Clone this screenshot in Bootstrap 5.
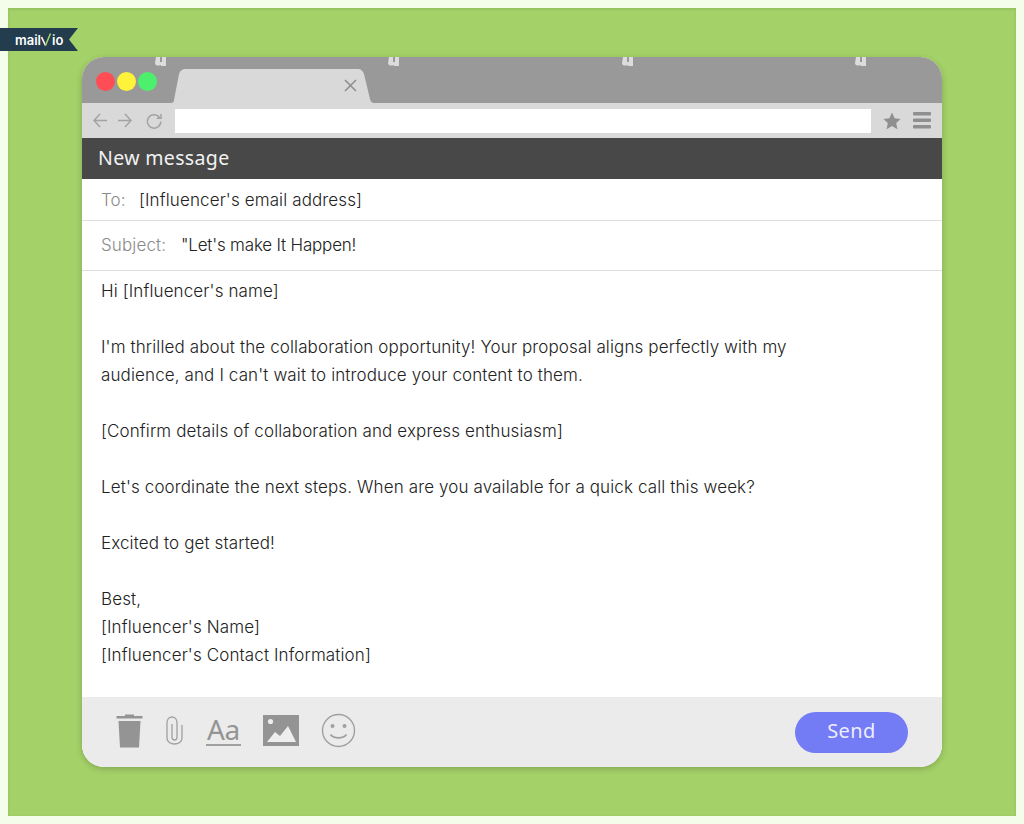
<!DOCTYPE html>
<html lang="en">
<head>
<meta charset="UTF-8">
<title>New message</title>
<link href="https://cdn.jsdelivr.net/npm/bootstrap@5.3.1/dist/css/bootstrap.min.css" rel="stylesheet">
<style>
body{background:#f4fdea;width:1024px;height:824px;padding:8px;overflow:hidden;font-family:"Inter","Noto Sans",sans-serif;}
.stage{width:1008px;height:808px;background:#a4d168;padding:49px 0 0 74px;box-shadow:inset 0 1px 3px rgba(0,0,0,.12);}
.ribbon{position:absolute;left:0;top:28px;width:78px;height:23px;}
.ribbon-text{position:absolute;left:15px;top:31px;font:600 13px/18px "Inter",sans-serif;color:#fff;}
.ribbon-text svg{vertical-align:-1px;}
.mail-win{width:860px;height:710px;border-radius:22px;overflow:hidden;background:#fff;box-shadow:0 2px 6px rgba(0,0,0,.2);position:relative;}
.tabbar{height:46px;background:#999;padding-left:14px;}
.tl{width:19px;height:19px;border-radius:50%;margin-right:2px;margin-top:15px;}
.tl-r{background:#ff4d55;}.tl-y{background:#fff23a;}.tl-g{background:#4df06d;}
.tab-shape{width:203px;height:34px;margin:12px 0 0 12px;}
.nick{position:absolute;top:0;width:11px;height:9px;}
.urlbar{height:35px;background:#d9d9d9;padding:0 11px;}
.url-input{width:696px;height:24px;background:#fff;margin:0 12px 0 13px;}
.title-bar{height:41px;background:#484848;color:#f2f2f2;font:400 19.5px/40px "Noto Sans",sans-serif;padding-left:16px;letter-spacing:.35px;}
.field-row{border-bottom:1px solid #dedede;padding-left:19px;font-size:17px;font-weight:300;color:#222;letter-spacing:.12px;}
.row-to{height:42px;line-height:42px;}
.row-subject{height:50px;line-height:48px;}
.field-label{color:#8b8b8b;}
.to-label{width:38px;}
.subject-label{width:80px;}
.subject-value{letter-spacing:-.2px;}
.msg-body{height:426px;padding:6px 0 0 19px;font-size:17px;font-weight:300;line-height:28px;color:#222;letter-spacing:.12px;}
.msg-body p{margin:0 0 28px;}
.tools{height:70px;background:#ebebeb;padding:0 34px;}
.tool-icons{gap:22px;margin-bottom:3px;}
.aa-icon{display:block;width:35px;color:#949494;font:400 28px/29px "Noto Sans",sans-serif;border-bottom:2px solid #a0a0a0;text-align:center;letter-spacing:-.3px;}
.send-btn{width:113px;height:41px;border-radius:21px;background:#737bf5;color:#eef;font:400 20px/38px "Noto Sans",sans-serif;text-align:center;padding:0 0 2px;border:0;letter-spacing:.4px;}
</style>
</head>
<body>
<div class="stage">
  <div class="mail-win">
    <div class="tabbar d-flex">
      <div class="tl tl-r"></div><div class="tl tl-y"></div><div class="tl tl-g"></div>
      <svg class="tab-shape" viewBox="0 0 203 34"><path d="M0 34C2 34 3 33 3 31L8 5C9 2 11 0 15 0H187C190 0 192 2 193 5L199 30C200 33 201 34 203 34Z" fill="#d9d9d9"/><path d="M174 11L185 22M185 11L174 22" stroke="#8c8c8c" stroke-width="1.5" fill="none"/></svg>
    </div>
    <svg class="nick" style="left:73px" viewBox="0 0 11 9"><path d="M1 0H5V5H7V0H11V9H6V8C4 9 0 9 0 6Z" fill="#dcdcdc"/></svg>
    <svg class="nick" style="left:306px" viewBox="0 0 11 9"><path d="M1 0H5V5H7V0H11V9H6V8C4 9 0 9 0 6Z" fill="#dcdcdc"/></svg>
    <svg class="nick" style="left:540px" viewBox="0 0 11 9"><path d="M1 0H5V5H7V0H11V9H6V8C4 9 0 9 0 6Z" fill="#dcdcdc"/></svg>
    <svg class="nick" style="left:773px" viewBox="0 0 11 9"><path d="M1 0H5V5H7V0H11V9H6V8C4 9 0 9 0 6Z" fill="#dcdcdc"/></svg>
    <div class="urlbar d-flex align-items-center">
      <svg width="14" height="15" viewBox="0 0 14 15" style="margin-right:11px" fill="none" stroke="#a3a3a3" stroke-width="1.5"><path d="M14 7.5H1M7 1L1 7.5L7 14"/></svg>
      <svg width="14" height="15" viewBox="0 0 14 15" style="margin-right:14px" fill="none" stroke="#a3a3a3" stroke-width="1.5"><path d="M0 7.5H13M7 1L13 7.5L7 14"/></svg>
      <svg width="16" height="16" viewBox="0 0 16 16" fill="none" stroke="#a3a3a3" stroke-width="1.5"><path d="M13.5 4.5A6.7 6.7 0 1 0 14.8 8.5M15 1V5.2H10.8"/></svg>
      <div class="url-input"></div>
      <svg width="18" height="18" viewBox="0 0 18 18" style="margin-right:12px"><path d="M9 .5L11.6 6.2L17.6 6.9L13.2 11L14.4 17.2L9 14.1L3.6 17.2L4.8 11L.4 6.9L6.4 6.2Z" fill="#8f8f8f"/></svg>
      <svg width="18" height="17" viewBox="0 0 18 17" fill="#8f8f8f"><rect width="18" height="3.5" rx="1"/><rect y="6.5" width="18" height="3.5" rx="1"/><rect y="13" width="18" height="3.5" rx="1"/></svg>
    </div>
    <div class="title-bar">New message</div>
    <div class="field-row row-to d-flex"><span class="field-label to-label">To:</span><span>[Influencer's email address]</span></div>
    <div class="field-row row-subject d-flex"><span class="field-label subject-label">Subject:</span><span class="subject-value">"Let's make It Happen!</span></div>
    <div class="msg-body">
      <p>Hi [Influencer's name]</p>
      <p>I'm thrilled about the collaboration opportunity! Your proposal aligns perfectly with my<br>audience, and I can't wait to introduce your content to them.</p>
      <p>[Confirm details of collaboration and express enthusiasm]</p>
      <p>Let's coordinate the next steps. When are you available for a quick call this week?</p>
      <p>Excited to get started!</p>
      <p>Best,<br>[Influencer's Name]<br>[Influencer's Contact Information]</p>
    </div>
    <div class="tools d-flex align-items-center justify-content-between">
      <div class="tool-icons d-flex align-items-center">
        <svg width="27" height="35" viewBox="0 0 27 35" fill="#949494"><path d="M9 1.5H18V3H26.5V5.5H.5V3H9Z"/><path d="M2.5 8H24.5L23 34.5H4Z"/></svg>
        <svg width="19" height="31" viewBox="0 0 19 31" fill="none" stroke="#a0a0a0" stroke-width="1.3"><path d="M17 10V23C17 31 2 31 2 23V8C2 0 12 0 12 8V22C12 26 7 26 7 22V9"/></svg>
        <span class="aa-icon">Aa</span>
        <svg width="36" height="31" viewBox="0 0 36 31"><rect width="36" height="31" fill="#949494"/><circle cx="7.5" cy="6.5" r="2.6" fill="#eee"/><path d="M4 27L12 17L17 21L25 11L33 27Z" fill="#eee"/></svg>
        <svg width="35" height="35" viewBox="0 0 35 35" fill="none" stroke="#a0a0a0" stroke-width="1.4"><circle cx="17.5" cy="17.5" r="16"/><circle cx="11.5" cy="13" r="2" fill="#a0a0a0" stroke="none"/><circle cx="23.5" cy="13" r="2" fill="#a0a0a0" stroke="none"/><path d="M9.5 21.5C13 26 22 26 25.5 21.5" stroke-width="1.8"/></svg>
      </div>
      <button type="button" class="btn send-btn">Send</button>
    </div>
  </div>
</div>
<svg class="ribbon" viewBox="0 0 78 23"><path d="M0 0H78L69 11.5L78 23H0Z" fill="#233c4e"/></svg>
<div class="ribbon-text">mail<svg width="11" height="13" viewBox="0 0 11 13" fill="none"><path d="M.5 4L4.5 12.5" stroke="#fff" stroke-width="1.6"/><path d="M4.5 12.5L9.5 .5" stroke="#a4d168" stroke-width="1.6"/></svg>io</div>
<script src="https://cdn.jsdelivr.net/npm/bootstrap@5.3.1/dist/js/bootstrap.bundle.min.js"></script>
</body>
</html>
